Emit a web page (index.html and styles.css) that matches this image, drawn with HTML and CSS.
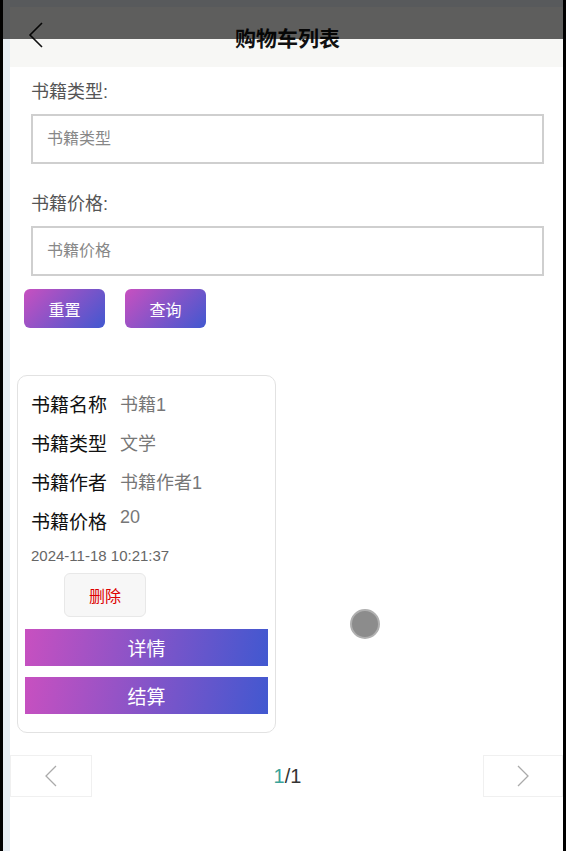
FILE: index.html
```html
<!DOCTYPE html>
<html lang="zh-CN">
<head>
    <meta charset="UTF-8">
    <meta name="viewport" content="width=device-width, initial-scale=1.0">
    <title>购物车列表</title>
    <link rel="stylesheet" href="styles.css">
</head>
<body>
    <div class="page">
        <div class="top-shade"></div>

        <div class="header">
            <span class="back">
                <svg width="16" height="26" viewBox="0 0 16 26"><polyline points="14,1 2,13 14,25" fill="none" stroke="#111" stroke-width="1.6"/></svg>
            </span>
            <h1>购物车列表</h1>
        </div>

        <div class="search">
            <label class="search-label">书籍类型:</label>
            <input class="search-input" type="text" placeholder="书籍类型">
            <label class="search-label second">书籍价格:</label>
            <input class="search-input" type="text" placeholder="书籍价格">
            <div class="search-buttons">
                <button class="grad-btn">重置</button>
                <button class="grad-btn">查询</button>
            </div>
        </div>

        <div class="card">
            <div class="row"><span class="row-label">书籍名称</span><span class="row-value">书籍1</span></div>
            <div class="row"><span class="row-label">书籍类型</span><span class="row-value">文学</span></div>
            <div class="row"><span class="row-label">书籍作者</span><span class="row-value">书籍作者1</span></div>
            <div class="row"><span class="row-label">书籍价格</span><span class="row-value raised">20</span></div>
            <div class="date">2024-11-18 10:21:37</div>
            <button class="delete-btn">删除</button>
            <button class="bar-btn">详情</button>
            <button class="bar-btn">结算</button>
        </div>

        <div class="pager">
            <div class="pager-btn">
                <svg width="12" height="22" viewBox="0 0 12 22"><polyline points="11,1 1,11 11,21" fill="none" stroke="#aaa" stroke-width="1.3"/></svg>
            </div>
            <div class="pager-text"><span class="current">1</span>/1</div>
            <div class="pager-btn next">
                <svg width="12" height="22" viewBox="0 0 12 22"><polyline points="1,1 11,11 1,21" fill="none" stroke="#aaa" stroke-width="1.3"/></svg>
            </div>
        </div>

        <div class="touch-dot"></div>
    </div>
</body>
</html>
```

FILE: styles.css
```css
* {
    margin: 0;
    padding: 0;
    box-sizing: border-box;
}

body {
    background-color: #000000;
    padding: 0 3px;
    font-family: 'Liberation Sans', 'Noto Sans CJK SC', sans-serif;
    height: 851px;
    overflow: hidden;
}

.page {
    position: relative;
    background-color: #ffffff;
    border-left: 7px solid #e6ecf2;
    border-top: 7px solid #e6ecf2;
    height: 851px;
}

.top-shade {
    position: absolute;
    top: -7px;
    left: -7px;
    right: 0;
    height: 39px;
    background-color: rgba(0, 0, 0, 0.62);
    z-index: 5;
}

.header {
    height: 60px;
    background-color: #f7f7f5;
    display: flex;
    align-items: center;
    justify-content: center;
    position: relative;
}

.header h1 {
    font-size: 21px;
    font-weight: bold;
    color: #111111;
    margin-left: 2px;
    margin-top: -1px;
}

.back {
    position: absolute;
    left: 18px;
    top: 15px;
}

.search {
    padding: 12px 19px 0 21px;
}

.search-label {
    display: block;
    font-size: 18px;
    line-height: 26px;
    color: #555555;
}

.search-label.second {
    margin-top: 27px;
}

.search-input {
    display: block;
    width: 100%;
    height: 50px;
    margin-top: 9px;
    border: 2px solid #cfcfcf;
    padding: 0 14px;
    font-family: inherit;
    font-size: 16px;
    outline: none;
}

.search-input::placeholder {
    color: #888888;
}

.search-buttons {
    display: flex;
    gap: 20px;
    margin-top: 13px;
    margin-left: -7px;
}

.grad-btn {
    width: 81px;
    height: 39px;
    border: none;
    border-radius: 6px;
    background: linear-gradient(135deg, #c850c0, #4158d0);
    color: #ffffff;
    font-family: inherit;
    font-size: 16px;
}

.card {
    width: 259px;
    margin: 47px 0 0 7px;
    border: 1px solid #e2e2e2;
    border-radius: 10px;
    padding: 14px 7px 18px 7px;
}

.row {
    display: flex;
    align-items: center;
    height: 26px;
    margin-bottom: 13px;
    padding-left: 6px;
}

.row-label {
    font-size: 19px;
    color: #111111;
    width: 89px;
}

.row-value {
    font-size: 18px;
    color: #777777;
}

.row-value.raised {
    margin-top: -6px;
}

.date {
    font-size: 15px;
    line-height: 20px;
    color: #666666;
    padding-left: 6px;
}

.delete-btn {
    display: block;
    width: 82px;
    height: 44px;
    margin: 7px 0 0 39px;
    background-color: #f7f7f7;
    border: 1px solid #e8e8e8;
    border-radius: 6px;
    color: #dd0000;
    font-family: inherit;
    font-size: 16px;
}

.bar-btn {
    display: block;
    width: 243px;
    height: 37px;
    margin-top: 12px;
    border: none;
    background: linear-gradient(100deg, #c850c0, #4158d0);
    color: #ffffff;
    font-family: inherit;
    font-size: 19px;
}

.bar-btn + .bar-btn {
    margin-top: 11px;
}

.pager {
    display: flex;
    align-items: center;
    justify-content: space-between;
    margin-top: 22px;
    height: 42px;
}

.pager-btn {
    width: 82px;
    height: 42px;
    border: 1px solid #f0f0f0;
    display: flex;
    align-items: center;
    justify-content: center;
}

.pager-btn.next {
    width: 80px;
}

.pager-text {
    font-size: 20px;
    color: #333333;
}

.current {
    color: #3aa39a;
}

.touch-dot {
    position: absolute;
    left: 340px;
    top: 602px;
    width: 30px;
    height: 30px;
    border-radius: 50%;
    background-color: #8c8c8c;
    border: 2px solid #b0b0b0;
}
```
